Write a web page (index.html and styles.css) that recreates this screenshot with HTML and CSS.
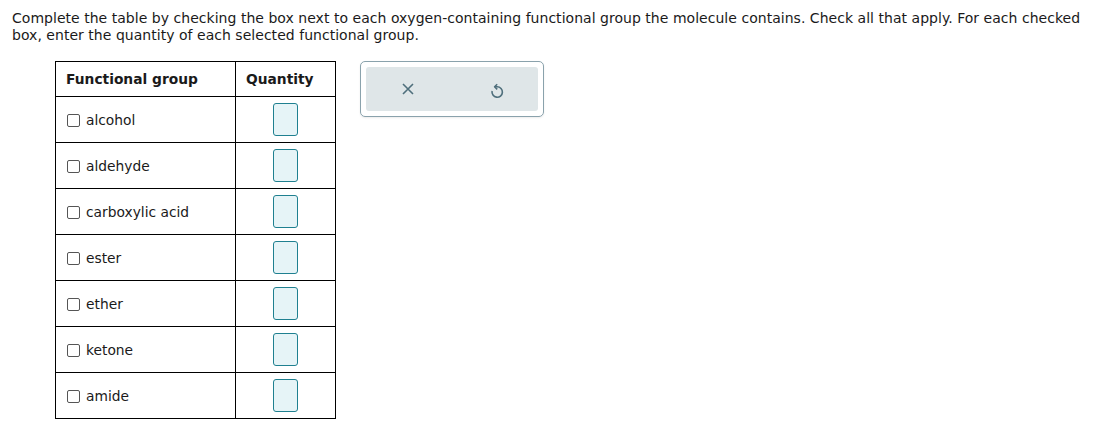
FILE: index.html
```html
<!DOCTYPE html>
<html>
<head>
<meta charset="utf-8">
<link rel="stylesheet" href="styles.css">
</head>
<body>
<p class="prompt">Complete the table by checking the box next to each oxygen-containing functional group the molecule contains. Check all that apply. For each checked box, enter the quantity of each selected functional group.</p>
<div class="work">
  <table class="fg">
    <thead>
      <tr><th class="c1">Functional group</th><th class="c2">Quantity</th></tr>
    </thead>
    <tbody>
      <tr><td class="c1"><span class="cb"></span>alcohol</td><td class="c2"><span class="qty"></span></td></tr>
      <tr><td class="c1"><span class="cb"></span>aldehyde</td><td class="c2"><span class="qty"></span></td></tr>
      <tr><td class="c1"><span class="cb"></span>carboxylic acid</td><td class="c2"><span class="qty"></span></td></tr>
      <tr><td class="c1"><span class="cb"></span>ester</td><td class="c2"><span class="qty"></span></td></tr>
      <tr><td class="c1"><span class="cb"></span>ether</td><td class="c2"><span class="qty"></span></td></tr>
      <tr><td class="c1"><span class="cb"></span>ketone</td><td class="c2"><span class="qty"></span></td></tr>
      <tr><td class="c1"><span class="cb"></span>amide</td><td class="c2"><span class="qty"></span></td></tr>
    </tbody>
  </table>
  <div class="tools">
    <div class="tools-inner">
      <svg class="ico" width="14" height="14" viewBox="0 0 14 14"><path d="M2 2 L12 12 M12 2 L2 12" stroke="#4f6f7c" stroke-width="1.6" fill="none"/></svg>
      <svg class="ico undo" width="14" height="17" viewBox="0 0 14 17"><path d="M4.6 4.8 H7.2 A5.2 5.2 0 1 1 2.1 9" stroke="#4f6f7c" stroke-width="1.6" fill="none"/><path d="M7.2 2.2 L4.6 4.8 L7.2 7.4" stroke="#4f6f7c" stroke-width="1.6" fill="none" stroke-linejoin="round"/></svg>
    </div>
  </div>
</div>
</body>
</html>
```
FILE: styles.css
```css
body {
  margin: 0;
  padding: 10px 12px;
  font-family: "DejaVu Sans", Verdana, sans-serif;
  color: #1a1a1a;
  background: #fff;
}
.prompt {
  margin: 0;
  font-size: 14px;
  line-height: 17px;
  letter-spacing: 0.03px;
}
.work {
  display: flex;
  align-items: flex-start;
  margin-top: 17px;
  padding-left: 43px;
}
.fg {
  border-collapse: collapse;
  font-size: 13.8px;
}
.fg th, .fg td {
  border: 1.5px solid #000;
  padding: 0;
}
.fg th {
  height: 34px;
  font-weight: bold;
  text-align: left;
}
.fg th.c1 { padding-left: 10px; width: 169px; }
.fg th.c2 { padding-left: 10px; width: 89px; }
.fg td { height: 45px; }
.fg td.c1 {
  padding-left: 11px;
}
.fg td.c2 { text-align: center; }
.cb {
  display: inline-block;
  width: 11px;
  height: 11px;
  border: 1px solid #555;
  border-radius: 2px;
  vertical-align: -2px;
  margin-right: 6px;
}
.qty {
  display: inline-block;
  width: 23px;
  height: 31px;
  border: 1px solid #1f8090;
  border-radius: 3px;
  background: #e6f4f7;
  vertical-align: middle;
}
.tools {
  margin-left: 24px;
  width: 184px;
  height: 56px;
  border: 1px solid #8aa2ac;
  border-radius: 5px;
  padding: 5px;
  box-sizing: border-box;
  box-shadow: 0 1px 2px rgba(0,0,0,0.08);
}
.tools-inner {
  height: 100%;
  background: #dfe6e8;
  border-radius: 3px;
  display: flex;
  align-items: center;
  justify-content: space-around;
}
.ico { display: block; }
.undo { margin-left: 6px; margin-top: 2px; }
```
